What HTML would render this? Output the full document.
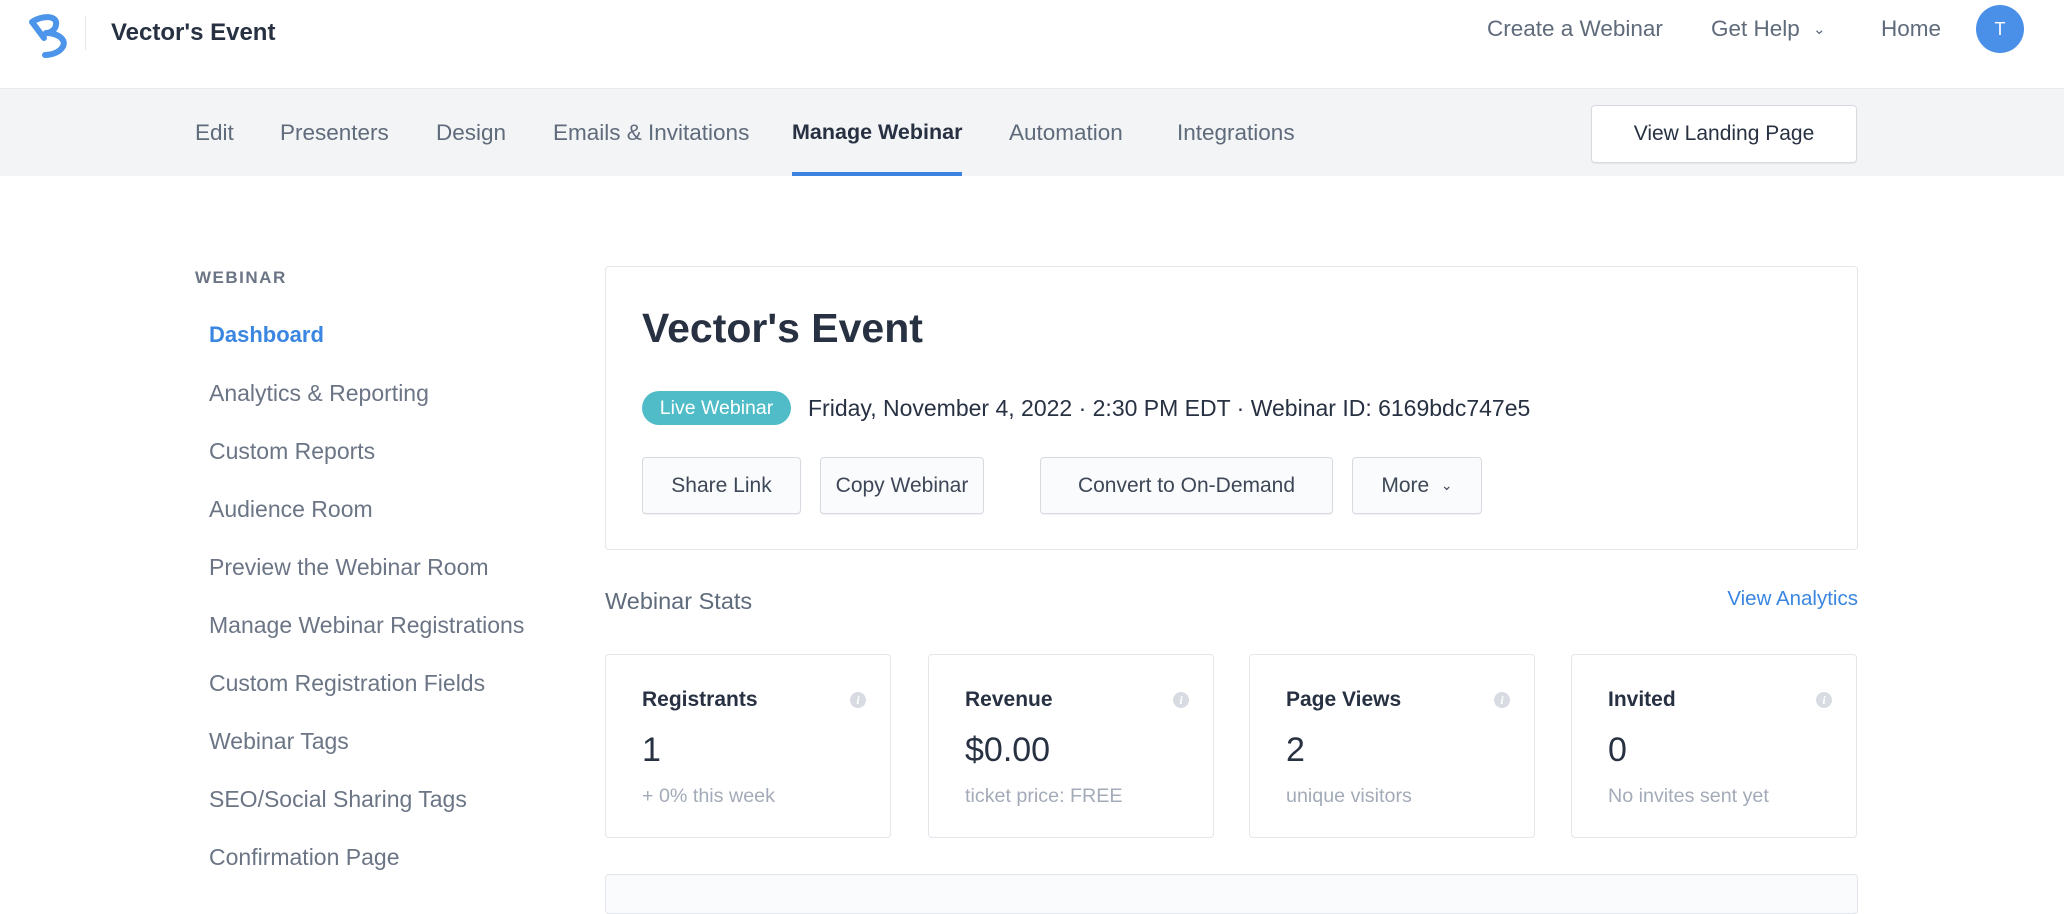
<!DOCTYPE html>
<html><head><meta charset="utf-8"><style>
*{box-sizing:border-box;margin:0;padding:0}
body{width:2064px;height:884px;overflow:hidden;background:#fff;font-family:"Liberation Sans",sans-serif;color:#273142;position:relative}
.a{position:absolute;white-space:nowrap}
.hdr{position:absolute;left:0;top:0;width:2064px;height:89px;border-bottom:1px solid #e8eaee}
.sub{position:absolute;left:0;top:89px;width:2064px;height:87px;background:#f3f4f6}
.nav{font-size:22.5px;color:#5f6b7b;top:120px}
.side{font-size:23px;color:#6b7585;left:209px}
.btn{position:absolute;border:1px solid #d7dbe1;border-radius:4px;background:#fafbfc;font-size:21px;color:#3d4757;display:flex;align-items:center;justify-content:center;box-shadow:0 1px 1px rgba(0,0,0,.06)}
.card{position:absolute;border:1px solid #e3e6ea;border-radius:4px;background:#fff}
.st{position:absolute;top:654px;width:286px;height:184px;border:1px solid #e3e6ea;border-radius:4px}
.st .l{position:absolute;left:36px;top:33px;font-size:21px;font-weight:bold;color:#273142}
.st .v{position:absolute;left:36px;top:76px;font-size:34px;color:#273142}
.st .s{position:absolute;left:36px;top:130px;font-size:19.7px;color:#a3abb8}
.st .i{position:absolute;right:24px;top:37px;width:16px;height:16px;border-radius:50%;background:#d8dce2;color:#fff;font-size:12px;font-weight:bold;text-align:center;line-height:16px;font-family:"Liberation Serif",serif;font-style:italic}
</style></head><body>
<div class="hdr"></div>
<svg class="a" style="left:0;top:0" width="80" height="70" viewBox="0 0 80 70"><path d="M44 38 L32 22 C42 15 58 15 56 25 C55 31 49 33 46 33 C58 33 68 40 62 48 C58 53 51 55 45 55" fill="none" stroke="#4c95ea" stroke-width="6" stroke-linecap="round" stroke-linejoin="round"/></svg>
<div class="a" style="left:85px;top:16px;width:1px;height:34px;background:#e3e6ea"></div>
<div class="a" style="left:111px;top:19px;font-size:24px;font-weight:bold;color:#273142">Vector's Event</div>
<div class="a" style="left:1487px;top:16px;font-size:22.5px;color:#5f6b7b">Create a Webinar</div>
<div class="a" style="left:1711px;top:16px;font-size:22.5px;color:#5f6b7b">Get Help</div>
<div class="a" style="left:1813px;top:20px;font-size:15px;color:#5f6b7b">&#8964;</div>
<div class="a" style="left:1881px;top:16px;font-size:22.5px;color:#5f6b7b">Home</div>
<div class="a" style="left:1976px;top:5px;width:48px;height:48px;border-radius:50%;background:#4a90e8;color:#fff;font-size:18px;text-align:center;line-height:48px">T</div>
<div class="sub"></div>
<div class="a nav" style="left:195px">Edit</div>
<div class="a nav" style="left:280px">Presenters</div>
<div class="a nav" style="left:436px">Design</div>
<div class="a nav" style="left:553px">Emails &amp; Invitations</div>
<div class="a nav" style="left:792px;color:#273142;font-weight:bold;font-size:21.5px">Manage Webinar</div>
<div class="a" style="left:792px;top:172px;width:170px;height:4px;background:#3d82e0"></div>
<div class="a nav" style="left:1009px">Automation</div>
<div class="a nav" style="left:1177px">Integrations</div>
<div class="btn" style="left:1591px;top:105px;width:266px;height:58px;background:#fff;color:#273142">View Landing Page</div>
<div class="a" style="left:195px;top:268px;font-size:17px;font-weight:bold;color:#6b7585;letter-spacing:1.5px">WEBINAR</div>
<div class="a side" style="top:322px;color:#3a86e0;font-weight:bold;font-size:22px">Dashboard</div>
<div class="a side" style="top:380px">Analytics &amp; Reporting</div>
<div class="a side" style="top:438px">Custom Reports</div>
<div class="a side" style="top:496px">Audience Room</div>
<div class="a side" style="top:554px">Preview the Webinar Room</div>
<div class="a side" style="top:612px">Manage Webinar Registrations</div>
<div class="a side" style="top:670px">Custom Registration Fields</div>
<div class="a side" style="top:728px">Webinar Tags</div>
<div class="a side" style="top:786px">SEO/Social Sharing Tags</div>
<div class="a side" style="top:844px">Confirmation Page</div>
<div class="card" style="left:605px;top:266px;width:1253px;height:284px"></div>
<div class="a" style="left:642px;top:305px;font-size:41px;font-weight:bold;color:#273142">Vector's Event</div>
<div class="a" style="left:642px;top:391px;width:149px;height:34px;border-radius:17px;background:#4fbcc8;color:#fff;font-size:19.5px;text-align:center;line-height:34px">Live Webinar</div>
<div class="a" style="left:808px;top:395px;font-size:23px;color:#273142">Friday, November 4, 2022 · 2:30 PM EDT · Webinar ID: 6169bdc747e5</div>
<div class="btn" style="left:642px;top:457px;width:159px;height:57px">Share Link</div>
<div class="btn" style="left:820px;top:457px;width:164px;height:57px">Copy Webinar</div>
<div class="btn" style="left:1040px;top:457px;width:293px;height:57px">Convert to On-Demand</div>
<div class="btn" style="left:1352px;top:457px;width:130px;height:57px">More&nbsp;&nbsp;<span style="font-size:14px">&#8964;</span></div>
<div class="a" style="left:605px;top:588px;font-size:23.5px;color:#5f6b7b">Webinar Stats</div>
<div class="a" style="right:206px;top:587px;font-size:20.5px;color:#3a86e0">View Analytics</div>
<div class="st" style="left:605px"><div class="l">Registrants</div><div class="v">1</div><div class="s">+ 0% this week</div><div class="i">i</div></div>
<div class="st" style="left:928px"><div class="l">Revenue</div><div class="v">$0.00</div><div class="s">ticket price: FREE</div><div class="i">i</div></div>
<div class="st" style="left:1249px"><div class="l">Page Views</div><div class="v">2</div><div class="s">unique visitors</div><div class="i">i</div></div>
<div class="st" style="left:1571px"><div class="l">Invited</div><div class="v">0</div><div class="s">No invites sent yet</div><div class="i">i</div></div>
<div class="card" style="left:605px;top:874px;width:1253px;height:40px;background:#fafbfc"></div>
</body></html>
